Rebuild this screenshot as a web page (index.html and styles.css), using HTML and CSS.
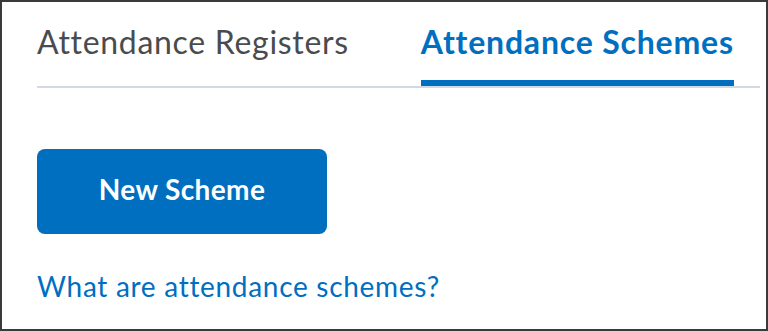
FILE: index.html
```html
<!DOCTYPE html>
<html lang="en">

<head>
  <meta charset="UTF-8">
  <meta name="viewport" content="width=device-width, initial-scale=1.0">
  <title>Attendance</title>

  <link rel="stylesheet" href="styles.css">
</head>

<body>
  <div class="frame">
    <div class="tabs">
      <div class="tab">Attendance Registers</div>
      <div class="tab active">Attendance Schemes</div>
    </div>

    <div class="content">
      <button class="new-btn">New Scheme</button>
      <a href="#" class="help-link">What are attendance schemes?</a>
    </div>
  </div>
</body>

</html>
```

FILE: styles.css
```css
body {
  margin: 0;
  font-family: Lato, "Noto Sans", sans-serif;
  background: #fff;
}

.frame {
  width: 768px;
  height: 331px;
  box-sizing: border-box;
  border: 2px solid #3a3a3a;
  padding: 0 6px 0 35px;
  overflow: hidden;
}

.tabs {
  display: flex;
  gap: 72px;
  border-bottom: 2px solid #d3d9e3;
  margin-top: 20px;
}

.tab {
  font-size: 32px;
  letter-spacing: 0.7px;
  color: #494c4e;
  padding-bottom: 18px;
  border-bottom: 6px solid transparent;
  line-height: 40px;
}

.tab.active {
  color: #006fbf;
  font-weight: bold;
  letter-spacing: 0.8px;
  border-bottom-color: #006fbf;
}

.content {
  display: flex;
  flex-direction: column;
  align-items: flex-start;
  padding-top: 61px;
}

.new-btn {
  width: 290px;
  height: 85px;
  padding: 0 0 6px;
  background: #006fbf;
  color: white;
  border: none;
  border-radius: 8px;
  font-family: inherit;
  font-size: 28px;
  letter-spacing: 0.4px;
  font-weight: bold;
  cursor: pointer;
}

.help-link {
  margin-top: 34px;
  font-size: 28px;
  letter-spacing: 0.7px;
  color: #006fbf;
  text-decoration: none;
  line-height: 36px;
}
```
